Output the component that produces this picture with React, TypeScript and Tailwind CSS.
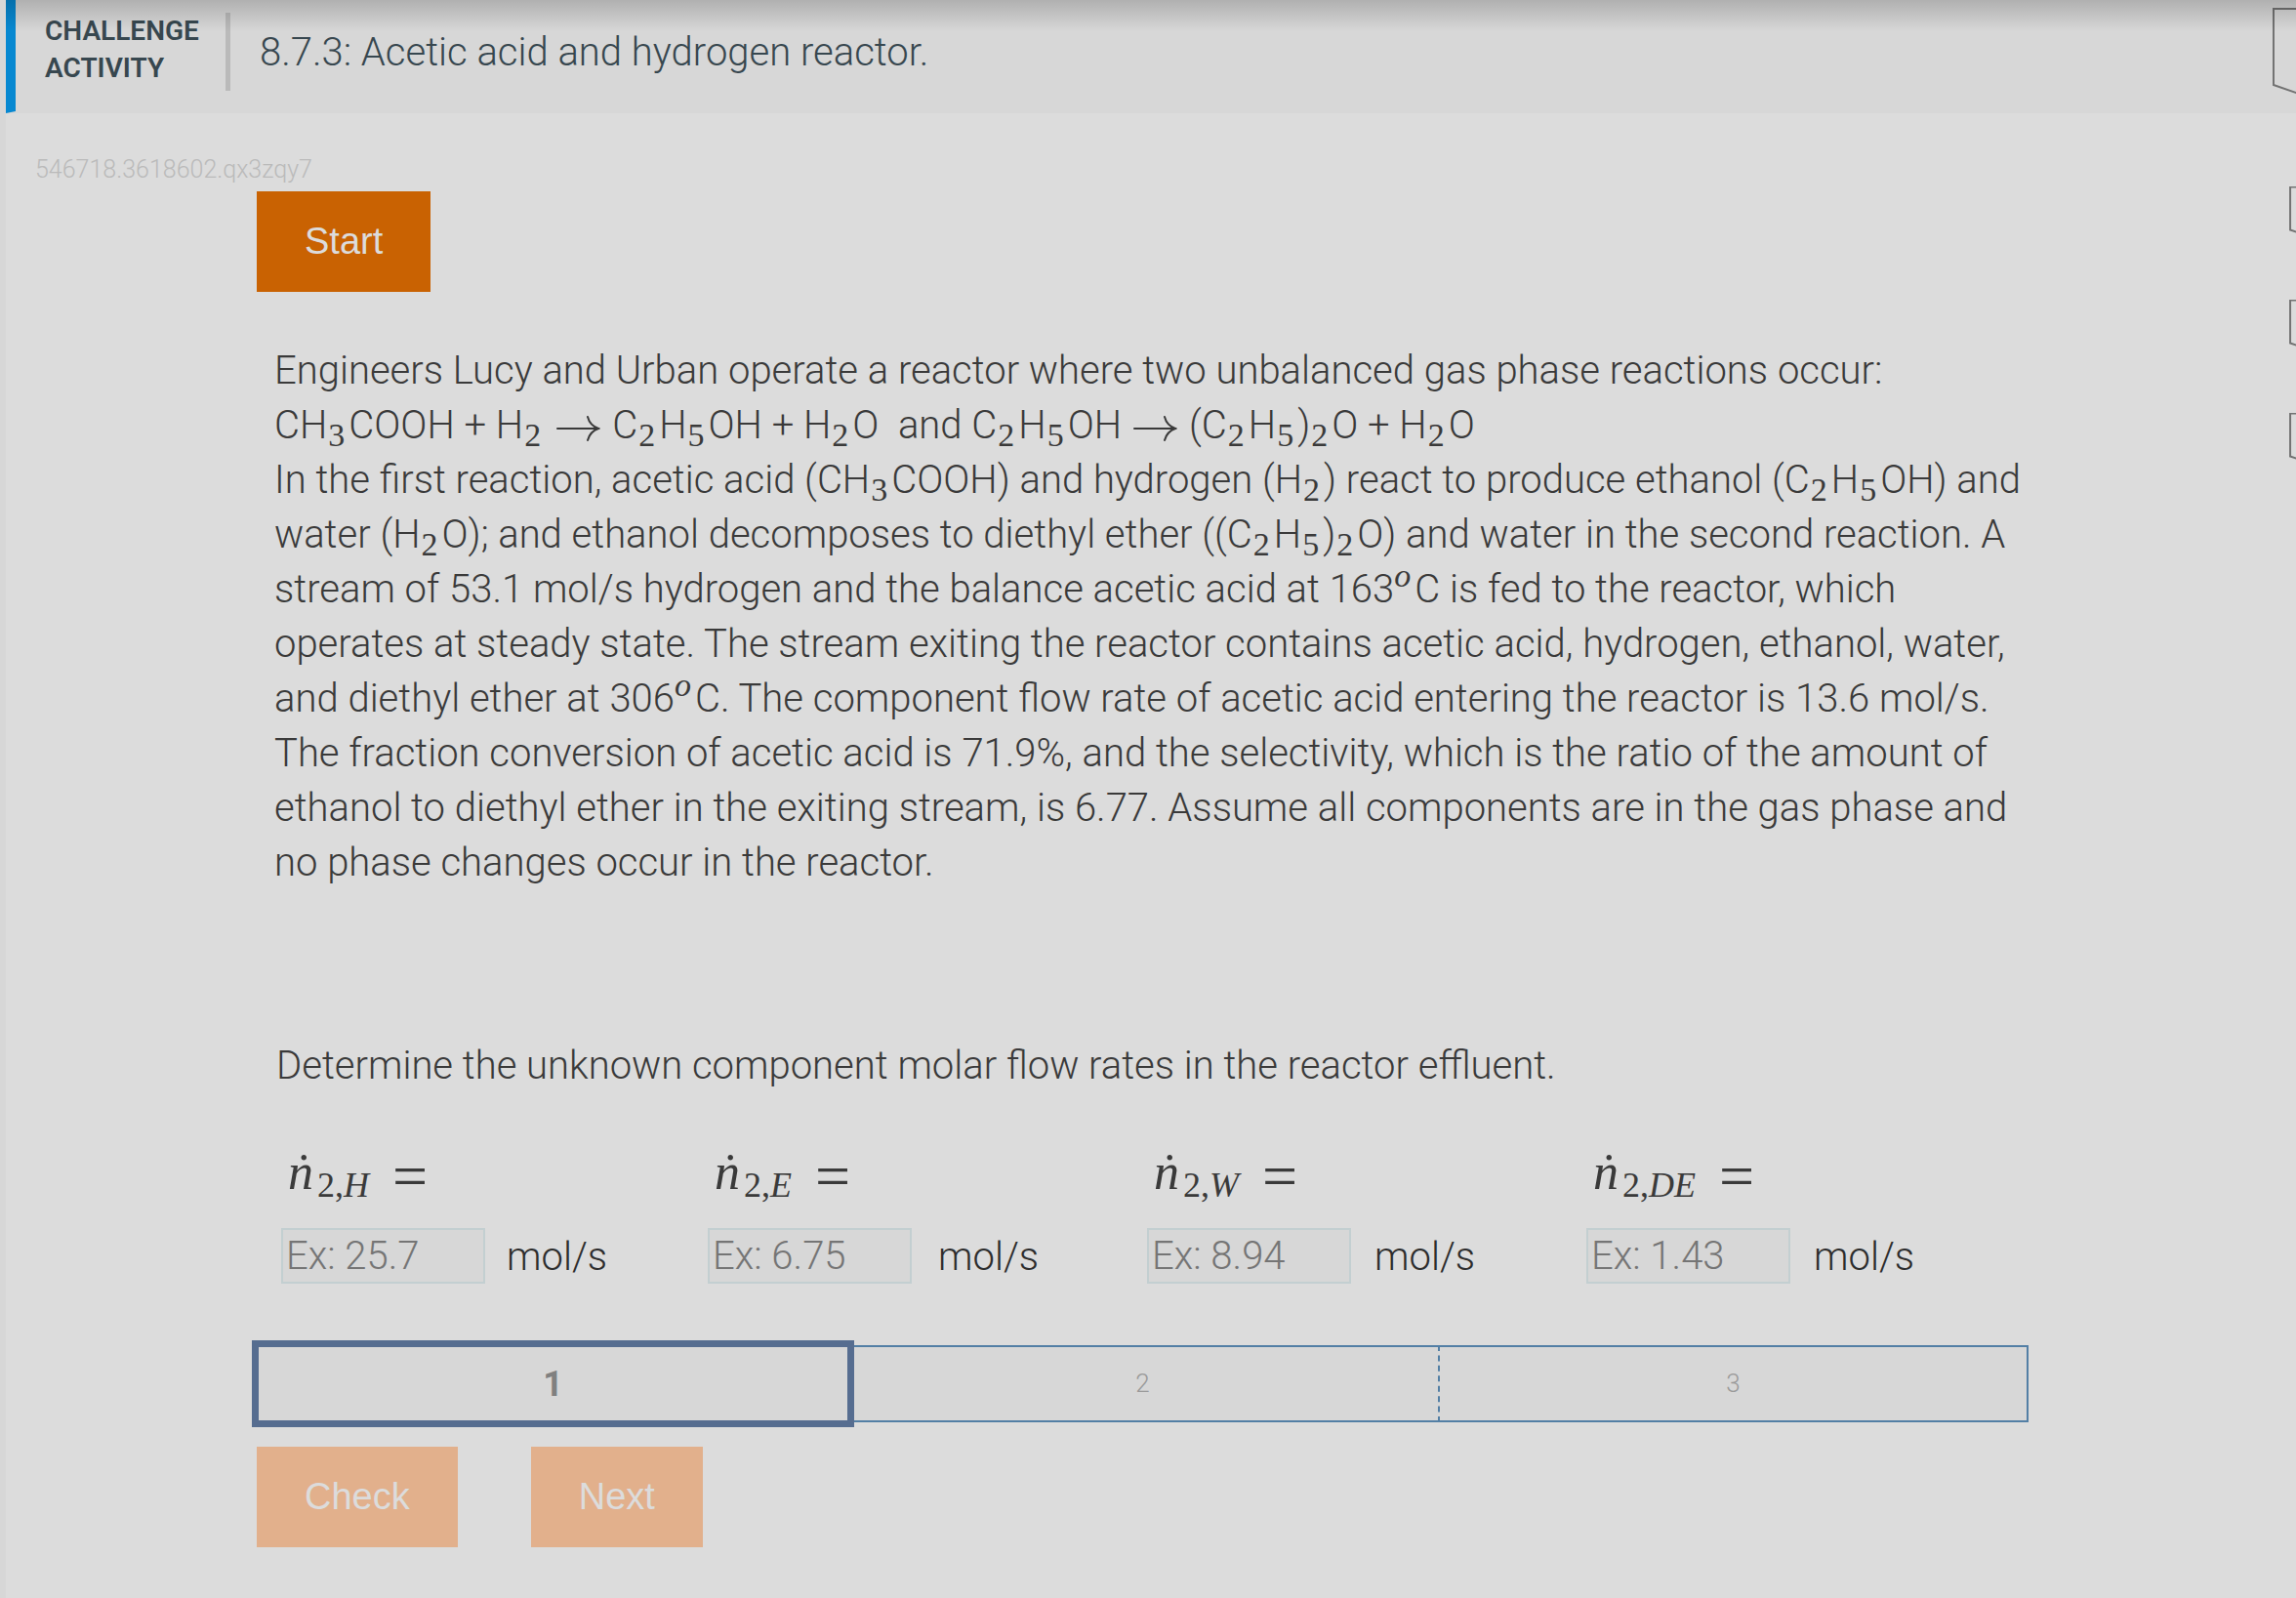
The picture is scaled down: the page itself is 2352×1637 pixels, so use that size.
import { Fragment } from "react";
import type { ReactNode } from "react";

type FlowRate = {
  id: string;
  subscript: string;
  example: string;
  column: string;
  gap: string;
};

const FLOW_RATES: FlowRate[] = [
  { id: "h", subscript: "H", example: "25.7", column: "w-[437px]", gap: "gap-[22px]" },
  { id: "e", subscript: "E", example: "6.75", column: "w-[450px]", gap: "gap-[27px]" },
  { id: "w", subscript: "W", example: "8.94", column: "w-[450px]", gap: "gap-[24px]" },
  { id: "de", subscript: "DE", example: "1.43", column: "w-[400px]", gap: "gap-[24px]" },
];

// --- Math helpers ---

function Sub({ children }: { children: ReactNode }) {
  return (
    <span className="relative top-2 ml-px mr-1 font-['Liberation_Serif',serif] text-[34px] leading-none font-normal">
      {children}
    </span>
  );
}

// "C2H5OH" -> letters with the digits lowered
function Formula({ children }: { children: string }) {
  return (
    <span className="whitespace-nowrap">
      {children.split(/(\d)/).map((part, i) =>
        /\d/.test(part) ? <Sub key={i}>{part}</Sub> : <Fragment key={i}>{part}</Fragment>,
      )}
    </span>
  );
}

function Degree() {
  return (
    <span className="relative -top-4 mr-1 font-['Liberation_Serif',serif] text-[34px] leading-none font-normal italic">
      o
    </span>
  );
}

function Arrow() {
  return (
    <svg
      role="img"
      aria-label="yields"
      viewBox="0 0 46 28"
      className="mr-3 ml-[11px] inline-block h-7 w-[46px] align-[-4px]"
      fill="none"
      stroke="currentColor"
      strokeWidth="2"
      strokeLinecap="round"
    >
      <path d="M2 14H44" />
      <path d="M33 2C34.500 8 38.500 12 44 14C38.500 16 34.500 20 33 26" />
    </svg>
  );
}

function Bookmark({ className }: { className: string }) {
  return (
    <svg
      aria-hidden="true"
      viewBox="0 0 48 96"
      className={className}
      fill="none"
      stroke="#737373"
      strokeWidth="2"
    >
      <path d="M1 1H47V79L24 87L1 79Z" vectorEffect="non-scaling-stroke" />
    </svg>
  );
}

function FlowRateField({ rate }: { rate: FlowRate }) {
  return (
    <div className={`${rate.column} shrink-0`}>
      <label
        htmlFor={rate.id}
        className="flex h-20 items-baseline pl-[7px] font-['Liberation_Serif',serif] text-[52px] leading-[38px] font-normal text-[#3a3a3a] italic"
      >
        ṅ
        <span className="relative top-2 ml-1 text-[36px]">
          <span className="not-italic">2,</span>
          {rate.subscript}
        </span>
        <span className="relative top-2 ml-6 text-[64px] not-italic">=</span>
      </label>
      <div className={`flex items-center ${rate.gap}`}>
        <input
          id={rate.id}
          type="text"
          placeholder={`Ex: ${rate.example}`}
          className="h-[57px] w-[209px] border-2 border-[#c3cfd1] bg-[#d7d7d7] px-[3px] text-[40px] font-light placeholder:text-[#757575]"
        />
        <span className="pt-0.5 text-[40px] leading-[54px] text-[#2d2d2d]">mol/s</span>
      </div>
    </div>
  );
}

export default function App() {
  return (
    <div className="relative min-h-screen overflow-hidden border-l-[6px] border-[#d7d7d7] bg-[#dcdcdc] font-[Roboto,sans-serif] font-light text-[#3a3a3a]">
      {/* Header */}
      <header className="flex h-[116px] items-start border-b-2 border-l-[10px] border-b-[#d7d7d7] border-l-[#0788d1] bg-[#d7d7d7] text-[#37474f]">
        <div className="mt-[13px] flex h-20 w-[220px] border-r-[5px] border-[#bababa] pl-[30px]">
          <h2 className="w-40 text-[28px] leading-[38px] font-semibold">CHALLENGE ACTIVITY</h2>
        </div>
        <h1 className="ml-[30px] flex-1 pt-[26px] text-[40px] leading-[56px]">
          8.7.3: Acetic acid and hydrogen reactor.
        </h1>
        <Bookmark className="mt-2 -mr-6 h-24 w-12" />
      </header>
      <div className="pointer-events-none absolute inset-x-0 top-0 h-8 bg-linear-to-b from-black/18 to-transparent" />

      {/* Margin bookmarks */}
      <div className="absolute top-[191px] -right-[21px] flex flex-col gap-[62px]">
        <Bookmark className="h-[54px] w-7" />
        <Bookmark className="h-[54px] w-7" />
        <Bookmark className="h-[54px] w-7" />
      </div>

      {/* Activity */}
      <main className="pl-[257px]">
        <p className="-ml-[227px] pt-[43px] text-[25px] leading-[30px] text-[#bababa]">
          546718.3618602.qx3zqy7
        </p>
        <button
          type="button"
          className="mt-[7px] h-[103px] bg-[#c96202] px-[49px] font-['Liberation_Sans',sans-serif] text-[38px] font-normal text-[#dcdcdc]"
        >
          Start
        </button>

        <div className="mt-[53px] ml-[18px] max-w-[1794px] text-[40px] leading-[56px]">
          <p>Engineers Lucy and Urban operate a reactor where two unbalanced gas phase reactions occur:</p>
          <p className="whitespace-nowrap">
            <Formula>CH3COOH + H2</Formula>
            <Arrow />
            <Formula>C2H5OH + H2O</Formula>
            &nbsp; and <Formula>C2H5OH</Formula>
            <Arrow />
            <Formula>(C2H5)2O + H2O</Formula>
          </p>
          <p>
            In the first reaction, acetic acid <Formula>(CH3COOH)</Formula> and hydrogen{" "}
            <Formula>(H2)</Formula> react to produce ethanol <Formula>(C2H5OH)</Formula> and water{" "}
            <Formula>(H2O);</Formula> and ethanol decomposes to diethyl ether{" "}
            <Formula>((C2H5)2O)</Formula> and water in the second reaction. A stream of 53.1 mol/s
            hydrogen and the balance acetic acid at 163
            <Degree />C is fed to the reactor, which operates at steady state. The stream exiting the
            reactor contains acetic acid, hydrogen, ethanol, water, and diethyl ether at 306
            <Degree />
            C. The component flow rate of acetic acid entering the reactor is 13.6 mol/s. The fraction
            conversion of acetic acid is 71.9%, and the selectivity, which is the ratio of the amount
            of ethanol to diethyl ether in the exiting stream, is 6.77. Assume all components are in
            the gas phase and no phase changes occur in the reactor.
          </p>
        </div>

        <p className="mt-[152px] ml-5 text-[40px] leading-[56px]">
          Determine the unknown component molar flow rates in the reactor effluent.
        </p>

        <div className="mt-[58px] ml-[25px] flex">
          {FLOW_RATES.map((rate) => (
            <FlowRateField key={rate.id} rate={rate} />
          ))}
        </div>

        {/* Progress */}
        <ol className="mt-[63px] grid h-[79px] max-w-[1815px] grid-cols-3 text-[26px] text-[#9a9a9a]">
          <li className="relative -my-[5px] -mr-[7px] -ml-[5px] flex items-center justify-center border-[7px] border-[#566d90] bg-[#d7d7d7] text-[36px] font-bold text-[#808080]">
            1
          </li>
          <li className="flex items-center justify-center border-y-2 border-[#537fa5] bg-[#d7d7d7]">
            2
          </li>
          <li className="flex items-center justify-center border-2 border-[#537fa5] bg-[#d7d7d7] [border-left-style:dashed]">
            3
          </li>
        </ol>

        <div className="mt-[25px] flex gap-[75px] font-['Liberation_Sans',sans-serif] text-[38px] font-normal text-[#dcdcdc]">
          <button type="button" disabled className="h-[103px] bg-[#e2b08c] px-[49px]">
            Check
          </button>
          <button type="button" disabled className="h-[103px] bg-[#e2b08c] px-[49px]">
            Next
          </button>
        </div>
      </main>
    </div>
  );
}
